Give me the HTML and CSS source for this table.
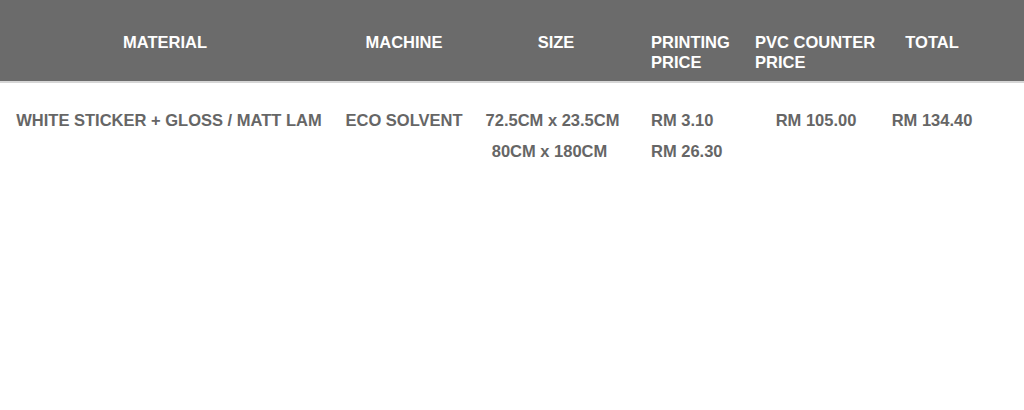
FILE: index.html
```html
<!DOCTYPE html>
<html>
<head>
<meta charset="utf-8">
<link rel="stylesheet" href="styles.css">
</head>
<body>
<div class="price-table">
  <div class="row head">
    <div class="cell center material">MATERIAL</div>
    <div class="cell center">MACHINE</div>
    <div class="cell center">SIZE</div>
    <div class="cell left">PRINTING<br>PRICE</div>
    <div class="cell left pvc">PVC COUNTER<br>PRICE</div>
    <div class="cell center">TOTAL</div>
    <div class="cell"></div>
  </div>
  <div class="body">
    <div class="row">
      <div class="cell center material-body">WHITE STICKER + GLOSS / MATT LAM</div>
      <div class="cell center">ECO SOLVENT</div>
      <div class="cell center size-1">72.5CM x 23.5CM</div>
      <div class="cell left">RM 3.10</div>
      <div class="cell center">RM 105.00</div>
      <div class="cell center">RM 134.40</div>
      <div class="cell"></div>
    </div>
    <div class="row">
      <div class="cell"></div>
      <div class="cell"></div>
      <div class="cell center size-2">80CM x 180CM</div>
      <div class="cell left">RM 26.30</div>
      <div class="cell"></div>
      <div class="cell"></div>
      <div class="cell"></div>
    </div>
  </div>
</div>
</body>
</html>
```
FILE: styles.css
```css
html, body {
  margin: 0;
  padding: 0;
  background: #ffffff;
}
.price-table {
  width: 1024px;
  font-family: "Liberation Sans", Arial, sans-serif;
  font-weight: bold;
  font-size: 16.5px;
  line-height: 20px;
}
.row {
  display: grid;
  grid-template-columns: 336px 136px 168px 105px 142px 90px 1fr;
  white-space: nowrap;
}
.head {
  background: #6b6b6b;
  color: #ffffff;
  box-sizing: border-box;
  padding-top: 32px;
  border-bottom: 2px solid #d6d6d6;
  height: 83px;
}
.body {
  color: #666666;
  padding-top: 27px;
  display: flex;
  flex-direction: column;
  gap: 11px;
}
.center { text-align: center; }
.left { text-align: left; padding-left: 11px; }
.pvc { padding-left: 10px; }
.material { padding-right: 6px; }
.material-body { padding-left: 2px; }
.size-1 { padding-right: 7px; }
.size-2 { padding-right: 13px; }
```
